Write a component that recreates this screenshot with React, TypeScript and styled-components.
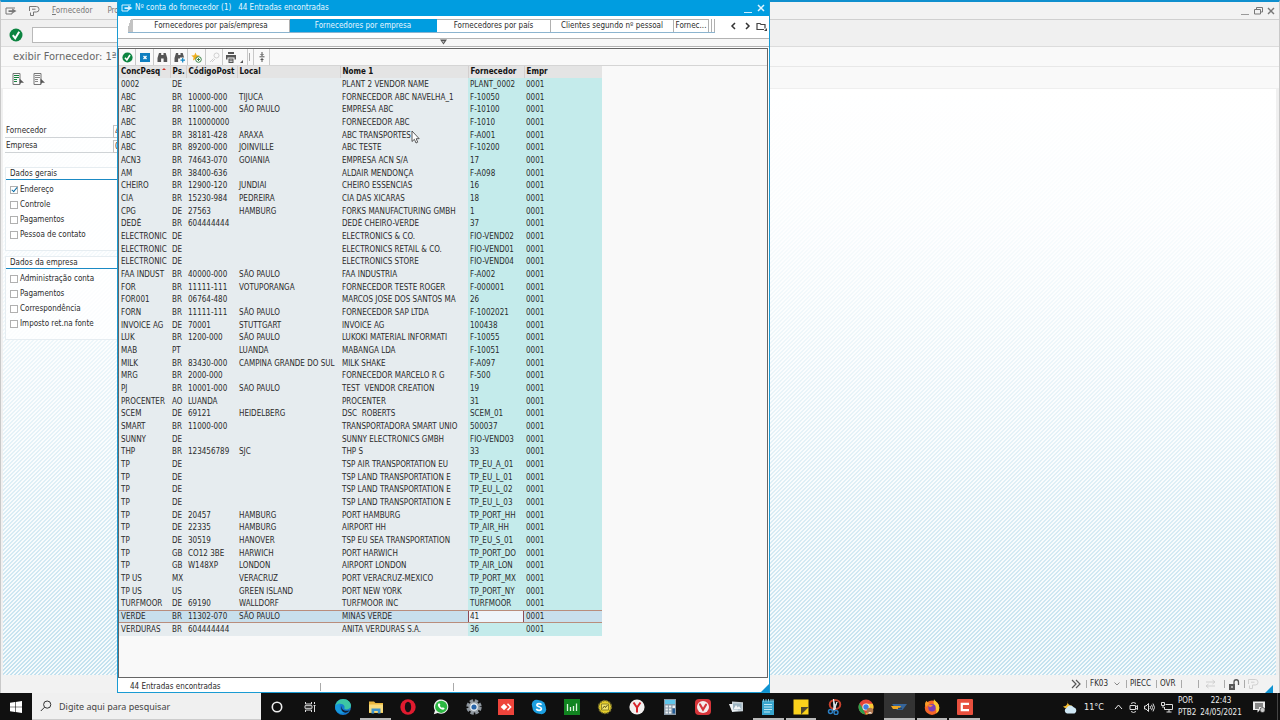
import React from "react";
import styled, { createGlobalStyle, css } from "styled-components";

const GlobalStyle = createGlobalStyle`
  *, *::before, *::after { box-sizing: border-box; }
  body { margin: 0; background: #101010; }
  button, input { font: inherit; color: inherit; }
  svg { display: block; flex: none; }
`;

const SAP_FONT = `"DejaVu Sans Condensed", "DejaVu Sans", sans-serif`;
const WIN_FONT = `"Noto Sans", "Open Sans", sans-serif`;

/* ---------- page ---------- */

const Desktop = styled.div`
  display: flex;
  flex-direction: column;
  min-height: 100vh;
  font-family: ${SAP_FONT};
  font-size: 8px;
  line-height: 12px;
  color: #2b2b2b;
`;

const Workspace = styled.div`
  position: relative;
  flex: 1;
  display: flex;
  flex-direction: column;
`;

const BareButton = styled.button`
  display: flex;
  align-items: center;
  justify-content: center;
  padding: 0;
  border: 0;
  background: none;
  white-space: nowrap;
`;

/* ---------- main window ---------- */

const MainWindow = styled.main`
  flex: 1;
  display: flex;
  flex-direction: column;
  border-top: 2px solid #0f8fce;
  border-left: 1px solid #c9c9c9;
  border-right: 1px solid #c9c9c9;
  background: #f0f0f0;
`;

const MenuBar = styled.nav`
  display: flex;
  align-items: center;
  gap: 12px;
  height: 18px;
  padding: 0 4px;
  border-bottom: 1px solid #cfcfcf;
  background: #f2f2f2;
  color: #777;
`;

const MenuItems = styled.div`
  display: flex;
  gap: 15px;
`;

const WindowButtons = styled.div`
  display: flex;
  gap: 4px;
  margin-left: auto;
`;

const CommandRow = styled.div`
  display: flex;
  align-items: center;
  gap: 9px;
  height: 27px;
  padding: 4px 8px 0;
  border-bottom: 1px solid #dcdcdc;
`;

const CommandInput = styled.input`
  width: 150px;
  height: 16px;
  padding: 0 4px;
  border: 1px solid #b9b9b9;
  background: #fff;
`;

const TitleRow = styled.h1`
  height: 20px;
  margin: 0;
  padding: 0 12px;
  border-bottom: 1px solid #e8e8e8;
  background: #f9f9f9;
  font-size: 11px;
  line-height: 20px;
  font-weight: 400;
  color: #666;
`;

const AppToolbar = styled.div`
  display: flex;
  align-items: center;
  gap: 9px;
  height: 22px;
  padding: 2px 11px 0;
  border-bottom: 1px solid #efefef;
  background: #f9f9f9;
`;

const Canvas = styled.div`
  flex: 1;
  margin: 0 3px 0 2px;
  padding: 36px 2px 0;
  background-image:
    linear-gradient(180deg, #fff 0%, rgba(255, 255, 255, 0.92) 20%, rgba(255, 255, 255, 0.6) 60%, rgba(255, 255, 255, 0.1) 100%),
    linear-gradient(135deg, #bcdeed 0 25%, #f4fafc 25% 50%, #bcdeed 50% 75%, #f4fafc 75% 100%);
  background-size: auto, 4px 4px;
`;

const FormRow = styled.label`
  display: flex;
  align-items: center;
  width: 300px;
  height: 13px;
  margin-bottom: 2px;
`;

const FormName = styled.span`
  width: 108px;
  height: 13px;
  padding-left: 1px;
  border-bottom: 1px solid #cfd3d6;
`;

const FormInput = styled.input`
  width: 80px;
  height: 13px;
  padding: 0 1px;
  border: 1px solid #c4c4c4;
  background: #fff;
`;

const GroupList = styled.div`
  padding-top: 12px;
`;

const Group = styled.fieldset`
  width: 340px;
  margin: 0 0 5px;
  padding: 0 0 8px;
  border: 1px solid #e6edf1;
  background: rgba(255, 255, 255, 0.75);
`;

const GroupTitle = styled.legend`
  float: left;
  width: 100%;
  height: 12px;
  margin-bottom: 2px;
  padding: 0 4px;
  border-bottom: 1px solid #1b8ac4;
  background: #fff;
`;

const CheckRow = styled.label`
  clear: both;
  display: flex;
  align-items: center;
  gap: 2px;
  height: 15px;
  padding-left: 4px;
`;

const CheckBox = styled.input`
  position: relative;
  appearance: none;
  width: 8px;
  height: 8px;
  margin: 0;
  border: 1px solid #b0b0b0;
  background: #fff;
  &:checked::after {
    content: "";
    position: absolute;
    left: 2px;
    top: -1px;
    width: 3px;
    height: 6px;
    border: solid #0a6ea8;
    border-width: 0 1px 1px 0;
    transform: rotate(40deg);
  }
`;

const StatusBar = styled.footer`
  display: flex;
  align-items: center;
  justify-content: flex-end;
  height: 18px;
  padding-right: 6px;
  background: #f2f2f2;
`;

const StatusItem = styled.div<{ $w: number }>`
  display: flex;
  align-items: center;
  gap: 6px;
  width: ${(p) => p.$w}px;
  height: 8px;
  padding-left: 3px;
  border-left: 1px solid #aaa;
`;

const Grip = styled.span`
  align-self: flex-end;
  border: 4px solid #0f93d2;
  border-top-color: transparent;
  border-left-color: transparent;
`;

/* ---------- dialog ---------- */

const Dialog = styled.section`
  position: absolute;
  top: 0;
  bottom: 0;
  left: 117px;
  width: 653px;
  display: flex;
  flex-direction: column;
  border: solid #1a9bd3;
  border-width: 0 1px 1px;
  background: #fff;
`;

const DialogTitle = styled.header`
  display: flex;
  align-items: center;
  gap: 2px;
  height: 16px;
  padding: 0 4px 0 3px;
  background: #009de0;
  color: #e9f7ff;
  white-space: pre;
`;

const TabBar = styled.div`
  display: flex;
  align-items: flex-end;
  height: 17px;
  padding: 0 2px 0 10px;
`;

const TabList = styled.div`
  display: flex;
  height: 14px;
  border-bottom: 1px solid #8cb4cf;
`;

const TabLead = styled.span`
  width: 5px;
  background: linear-gradient(110deg, #fff 0 30%, #c3c3c3 30% 100%);
`;

const Tab = styled(BareButton)<{ $w: number; $active?: boolean }>`
  width: ${(p) => p.$w}px;
  border: solid #b0b0b0;
  border-width: 1px 1px 0 0;
  ${(p) =>
    p.$active &&
    css`
      background: #009de0;
      color: #e6f6ff;
      border-color: #009de0;
    `}
`;

const TabStack = styled.span`
  width: 3px;
  border-right: 1px solid #b0b0b0;
`;

const TabTools = styled.div`
  display: flex;
  gap: 4px;
  align-items: center;
  height: 14px;
  margin-left: auto;
`;

const Splitter = styled.div`
  display: flex;
  justify-content: center;
  height: 9px;
  margin: 5px 0 1px;
  border: solid #b3b3b3;
  border-width: 1px 0;
  background: #f7f7f7;
`;

const ListFrame = styled.div`
  flex: 1;
  margin-right: 1px;
  border: 1px solid #666;
  background: #f9f9f9;
`;

const Toolbar = styled.div`
  display: flex;
  align-items: center;
  height: 16px;
`;

const Tool = styled(BareButton)<{ $w?: number }>`
  width: ${(p) => p.$w ?? 17}px;
  height: 16px;
  border-right: 1px solid #c9c9c9;
`;

const BoxedTool = styled(Tool)`
  border-left: 1px solid #c9c9c9;
`;

const ToolRule = styled.span`
  width: 1px;
  height: 8px;
  margin: 0 3px 0 1px;
  background: #aaa;
`;

const HeadBar = styled.div`
  border-top: 1px solid #d5d5d5;
`;

const Table = styled.table`
  width: 483px;
  table-layout: fixed;
  border-collapse: collapse;
  line-height: 12px;
  white-space: pre;
`;

const Th = styled.th`
  height: 12px;
  padding: 0 0 0 2px;
  border-right: 1px solid #d3cfcf;
  background: #e4e4e4;
  color: #111;
  font-weight: 700;
  text-align: left;
  &:last-child { border-right: 0; }
`;

const SortMark = styled.span`
  display: inline-block;
  margin-left: 2px;
  vertical-align: 4px;
  border: solid transparent;
  border-width: 0 2px 2px;
  border-bottom-color: #d0342c;
`;

const Row = styled.tr<{ $selected?: boolean }>`
  height: 13px;
  &:nth-child(3n) { height: 12px; }
  td {
    ${(p) =>
      p.$selected &&
      css`
        background: #c8dfec;
        box-shadow: inset 0 1px #b98d7c, inset 0 -1px #b98d7c;
      `}
  }
`;

const Td = styled.td<{ $key?: boolean }>`
  height: 12px;
  padding: 0 0 0 2px;
  overflow: hidden;
  background: ${(p) => (p.$key ? "#c4ebeb" : "#e6ecef")};
`;

const CellCursor = styled.span`
  display: block;
  height: 11px;
  margin: 0 0 0 -2px;
  padding-left: 1px;
  border: 1px solid #8d4a55;
  border-width: 0 1px;
  background: #eff4fa;
  line-height: 11px;
`;

const DialogStatus = styled.footer`
  position: relative;
  display: flex;
  align-items: center;
  height: 14px;
  padding-top: 4px;
`;

const StatusCell = styled.span<{ $w: number; $pad: number }>`
  width: ${(p) => p.$w}px;
  height: 8px;
  padding-left: ${(p) => p.$pad}px;
  border-right: 1px solid #aaa;
  line-height: 8px;
`;

const Spacer = styled.span`
  flex: 1;
`;

const Pointer = styled.svg`
  position: absolute;
  left: 293px;
  top: 130px;
`;

/* ---------- taskbar ---------- */

const Taskbar = styled.nav`
  display: flex;
  height: 27px;
  background: #101010;
  color: #eee;
  font-family: ${WIN_FONT};
`;

const Start = styled(BareButton)`
  width: 32px;
`;

const Search = styled.label`
  display: flex;
  align-items: center;
  gap: 7px;
  width: 229px;
  padding-left: 8px;
  border-bottom: 1px solid #ccc;
  background: #f0f0f0;
`;

const SearchInput = styled.input`
  flex: 1;
  min-width: 0;
  padding: 2px 0 0;
  border: 0;
  outline: 0;
  background: none;
  font-size: 9px;
  color: #444;
  &::placeholder { color: #444; opacity: 1; }
`;

const Apps = styled.div`
  display: grid;
  grid-template-columns: repeat(22, 1fr);
  width: 720px;
`;

const AppButton = styled(BareButton)<{ $open?: boolean; $active?: boolean }>`
  margin: 0 1px;
  padding-top: 3px;
  border-bottom: 2px solid ${(p) => (p.$open ? "#b9b9b9" : "transparent")};
  background: ${(p) => (p.$active ? "#333" : "none")};
  background-clip: padding-box;
`;

const Tray = styled.div`
  display: flex;
  align-items: center;
  margin: 0 2px 0 auto;
  padding: 1px 2px 0 0;
  border-right: 1px solid #444;
  line-height: 12px;
`;

const TrayText = styled.span<{ $w: number; $size: number; $center?: boolean }>`
  width: ${(p) => p.$w}px;
  text-align: ${(p) => (p.$center ? "center" : "left")};
  font-family: ${SAP_FONT};
  font-size: ${(p) => p.$size}px;
  white-space: pre;
`;

const TrayIcon = styled(BareButton)<{ $w: number }>`
  width: ${(p) => p.$w}px;
`;

/* ---------- icons ---------- */

const MenuGlyph = ({ color }: { color: string }) => (
  <svg width="12" height="8" viewBox="0 0 12 8" fill="none" stroke={color}>
    <path d="M10 1H1v6h6V5.500" />
    <path d="M3.500 3.200h3.700V1.500L11.500 4 7.200 6.500V4.900H3.500z" fill={color} stroke="none" />
  </svg>
);

const SessionGlyph = ({ color = "#777" }: { color?: string }) => (
  <svg width="11" height="10" viewBox="0 0 11 10" fill="none" stroke={color}>
    <path d="M.5 5V.5h6.800a2.700 2.700 0 0 1 0 5.500H4.500v3.500h-3V6.500M3 3.200h3.500" />
  </svg>
);

const OkGlyph = ({ size }: { size: number }) => (
  <svg width={size} height={size} viewBox="0 0 14 14">
    <circle cx="7" cy="7" r="6.500" fill="#0c8440" />
    <path d="M3.800 7.200l2.400 3 4-6.400" fill="none" stroke="#fff" strokeWidth="2" />
  </svg>
);

const ListGlyph = ({ color }: { color: string }) => (
  <svg width="12" height="12" viewBox="0 0 12 12" fill="none" stroke="#555">
    <path d="M1 .5h7v11H1z" stroke="#777" />
    <path d="M2 2.500h5M2 4.500h5M2 6.500h3M2 8.500h3" stroke={color} strokeWidth="1.200" />
    <path d="M7.500 5.500v6l1.500-1.700h3z" fill="#555" stroke="none" />
  </svg>
);

const Binoculars = ({ plus }: { plus?: boolean }) => (
  <svg width="11" height="11" viewBox="0 0 11 11" fill="#555">
    <path d="M2 1h2.200v2H6.500V1h2.200l1.500 5v4H6.600V6.500H4.100V10H.5V6z" />
    {plus && <path d="M6 5.500h5V11H6z" fill="#f9f9f9" />}
    {plus && <path d="M6.500 8.200h4.500M8.700 6v4.500" stroke="#0f86c4" strokeWidth="1.200" />}
  </svg>
);

const tools: { label: string; w?: number; icon: React.ReactNode }[] = [
  { label: "Transferir", icon: <OkGlyph size={11} /> },
  {
    label: "Fechar",
    w: 18,
    icon: (
      <svg width="10" height="9" viewBox="0 0 10 9">
        <path d="M0 0h10v9H0z" fill="#0f7fc0" />
        <path d="M3.500 3l3 3M6.500 3l-3 3" stroke="#fff" strokeWidth="1.300" />
      </svg>
    ),
  },
  { label: "Procurar", icon: <Binoculars /> },
  { label: "Continuar procura", icon: <Binoculars plus /> },
  {
    label: "Inserir na lista pessoal",
    w: 18,
    icon: (
      <svg width="11" height="11" viewBox="0 0 11 11">
        <path d="M4.500.500l1.200 2.700 3 .300-2.200 2 .700 3-2.700-1.500L2 8.500l.600-3-2.300-2 3-.300z" fill="#efae1e" />
        <circle cx="7.500" cy="7.500" r="2.800" fill="#fff" stroke="#388246" />
        <path d="M6 7.500h3M7.500 6v3" stroke="#388246" />
      </svg>
    ),
  },
  {
    label: "Eliminar da lista pessoal",
    icon: (
      <svg width="11" height="11" viewBox="0 0 11 11" fill="none" stroke="#d0d0d0">
        <path d="M1 10l3.500-3.500M3 10l3-3" />
        <circle cx="7.500" cy="3.500" r="2.500" />
      </svg>
    ),
  },
  {
    label: "Imprimir",
    w: 25,
    icon: (
      <svg width="18" height="11" viewBox="0 0 18 11" fill="#555">
        <path d="M2 0h6v2H2zM0 3h10v4.500H8.500v-2h-7v2H0zM2.500 6.500h5V11h-5z" />
        <path d="M3.500 8h3M3.500 9.500h3" stroke="#f9f9f9" strokeWidth=".7" />
        <path d="M17 8v3h-3z" />
      </svg>
    ),
  },
];

const Svg16 = ({ children }: { children: React.ReactNode }) => (
  <svg width="16" height="16" viewBox="0 0 16 16">
    {children}
  </svg>
);

const apps: { name: string; open?: boolean; active?: boolean; icon: React.ReactNode }[] = [
  { name: "Cortana", icon: <circle cx="8" cy="8" r="4.700" fill="none" stroke="#eee" strokeWidth="1.600" /> },
  {
    name: "Visão de tarefas",
    icon: (
      <path d="M3.500 3v2h6V3M3.500 13v-2h6v2M3 6.700h7v2.600H3zM12.500 3v2M12.500 7v6M11.500 6.500h2" fill="none" stroke="#ddd" />
    ),
  },
  {
    name: "Edge",
    icon: (
      <>
        <circle cx="8" cy="8" r="8" fill="#1579cf" />
        <path d="M.2 7C1 2.800 4.300 0 8 0c5 0 8 3.500 8 6.600 0 2.500-2 3.800-4.200 3.800-2 0-2.800-.8-2.300-1.700C10 7 8.500 5 6 5 3.500 5 1 6 .2 7z" fill="#3cc5a4" />
        <path d="M.1 8.500C0 6 3 4.300 5.700 4.600 3.500 6.800 4.800 12 9.500 13.600c-1 .6-2 .9-3 .9C3 14.500.3 12 .1 8.500z" fill="#1598dc" />
        <path d="M7.500 6.500c-1.500 1.500-.5 4.500 2.500 5.200 1.800.4 3.600 0 4.700-.8-1.200 2.300-3.500 3-5.200 2.700C6 12.600 5.500 8 7.500 6.500z" fill="#101f33" />
      </>
    ),
  },
  {
    name: "Explorador",
    open: true,
    icon: (
      <>
        <path d="M1 2.500h5l1.500 1.500H15v10H1z" fill="#e9b63e" />
        <path d="M1 5.500h14v8H1z" fill="#f9dc7d" />
        <path d="M3.500 14.500V9.500h9v5h-2.700v-2.500H6.200v2.500z" fill="#3f93cb" />
      </>
    ),
  },
  {
    name: "Opera",
    icon: (
      <>
        <circle cx="8" cy="8" r="7.700" fill="#e01b2f" />
        <ellipse cx="8" cy="8" rx="3.200" ry="5.300" fill="#161013" />
      </>
    ),
  },
  {
    name: "WhatsApp",
    icon: (
      <>
        <path d="M.8 15.200L2 11.500A7.200 7.200 0 1 1 4.700 14z" fill="#eee" />
        <circle cx="8.200" cy="7.800" r="6.100" fill="#2bb741" />
        <path d="M5.600 4.500c1-.6 1.300.4 1.800 1.600-.8.800-.5 1 .3 1.900.9.900 1.400 1.100 2 .3 1.700.7 2.200 1 1.700 1.800-1 1.400-3.200.7-4.900-1C4.800 7.400 4.300 5.300 5.600 4.500z" fill="#fff" />
      </>
    ),
  },
  {
    name: "Configurações",
    icon: (
      <>
        <circle cx="8" cy="8" r="6.200" fill="none" stroke="#8d959d" strokeWidth="3" strokeDasharray="3.300 1.570" />
        <circle cx="8" cy="8" r="5.600" fill="#9aa1a8" />
        <circle cx="8" cy="8" r="3.800" fill="#eef3f7" />
        <circle cx="8" cy="8" r="2.600" fill="#2864a8" />
      </>
    ),
  },
  {
    name: "AnyDesk",
    icon: (
      <>
        <path d="M0 0h16v16H0z" fill="#ee443b" />
        <path d="M6 4.700L9.300 8 6 11.300 2.700 8z" fill="#fff" />
        <path d="M9 5.200l1-.9L13.700 8 10 11.700l-1-.9L11.700 8z" fill="#fff" />
      </>
    ),
  },
  {
    name: "Skype",
    icon: (
      <>
        <circle cx="5.500" cy="5.500" r="4.700" fill="#1c9fe0" />
        <circle cx="10.500" cy="10.500" r="4.700" fill="#1c9fe0" />
        <circle cx="8" cy="8" r="6.700" fill="#1c9fe0" />
        <path d="M10.500 5.800C9.900 4.200 6 4 5.800 6c-.1 2.200 4.700 1.400 4.600 3.800-.1 2.200-4.400 2.100-5-.1" fill="none" stroke="#fff" strokeWidth="1.700" />
      </>
    ),
  },
  {
    name: "Project",
    icon: (
      <>
        <path d="M0 0h16v16H0z" fill="#118420" />
        <path d="M3.500 5v7M6.500 8v4M9.500 7v5M12.500 4.500V12" stroke="#dff5df" strokeWidth="1.300" />
      </>
    ),
  },
  {
    name: "Monitor",
    icon: (
      <>
        <circle cx="8" cy="8" r="6.400" fill="#e7cf2b" stroke="#77702a" strokeWidth="1.500" strokeDasharray="2 1" />
        <path d="M4.500 5h7v6h-7z" fill="#efe36c" stroke="#7c7320" strokeWidth=".8" />
        <path d="M5.500 9.500L7.500 7l1 1.500L10.500 6" fill="none" stroke="#5d5616" />
      </>
    ),
  },
  {
    name: "Yandex",
    icon: (
      <>
        <circle cx="8" cy="8" r="7.600" fill="#f3f0f0" />
        <path d="M4.500 3.500L8 8.500l3.500-5M8 8v5.500" fill="none" stroke="#d8232b" strokeWidth="2" />
      </>
    ),
  },
  {
    name: "Calculadora",
    icon: (
      <>
        <path d="M2 0h12v16H2z" fill="#8a9aa8" />
        <path d="M3 1h10v4H3z" fill="#5fc5ea" />
        <path d="M3.500 7.500h6M3.500 10.500h6M3.500 13.500h6" stroke="#eef2f5" strokeWidth="2" strokeDasharray="2.400 1" />
        <path d="M10.500 6.500h2.500v2.500h-2.500z" fill="#eef2f5" />
        <path d="M10.500 9.500h2.500v5h-2.500z" fill="#235b94" />
      </>
    ),
  },
  {
    name: "Vivaldi",
    icon: (
      <>
        <rect width="16" height="16" rx="4" fill="#d6353a" />
        <circle cx="8" cy="8" r="6" fill="#f4eded" />
        <path d="M5 5.500l3 5.200 3-5" fill="none" stroke="#d6353a" strokeWidth="2.200" strokeLinecap="round" />
      </>
    ),
  },
  {
    name: "Fotos",
    icon: (
      <>
        <path d="M4 2.500l11 .8v9L4 13z" fill="#c8d2d8" />
        <path d="M1 5h9v6.500l-6 1z" fill="#eef1f3" />
        <path d="M5 4.500h8.500v6H5z" fill="#9db5c2" />
        <path d="M5.500 10l2.500-4 1.800 2.500L11 7l2 3z" fill="#f4f7f8" />
      </>
    ),
  },
  {
    name: "Bloco de notas",
    open: true,
    icon: (
      <>
        <path d="M2 1.500h12V16H2z" fill="#38a5cd" />
        <path d="M4 5.500h8M4 8h8M4 10.500h8M4 13h6" stroke="#bfe8f5" />
        <path d="M3.500 0v3M6 0v3M8.500 0v3M11 0v3M13 0v3" stroke="#7cc7de" />
      </>
    ),
  },
  {
    name: "Notas autoadesivas",
    open: true,
    icon: (
      <>
        <path d="M.5.500h15V8L8 15.500H.5z" fill="#fbd21c" />
        <path d="M15.500 8v7.500H8z" fill="#fbd21c" />
        <path d="M8 8h7.500L8 15.500z" fill="#4c4630" />
      </>
    ),
  },
  {
    name: "Ferramenta de captura",
    icon: (
      <>
        <ellipse cx="9" cy="5.500" rx="5.300" ry="4.500" fill="none" stroke="#c8402c" strokeWidth="2" />
        <path d="M7.500 0l1.800 10H8zM11 3L7 11h1.500z" fill="#e3e8ec" stroke="#e3e8ec" />
        <circle cx="4.500" cy="12.500" r="2" fill="none" stroke="#2c80c4" strokeWidth="1.500" />
        <circle cx="10" cy="13.500" r="2" fill="none" stroke="#2c80c4" strokeWidth="1.500" />
      </>
    ),
  },
  {
    name: "Chrome",
    icon: (
      <>
        <circle cx="8" cy="8" r="7.500" fill="#e5463a" />
        <path d="M1.500 4.200L5 10l2.500 5.500A7.500 7.500 0 0 1 1.500 4.200z" fill="#2ba24c" />
        <path d="M8 4.700h6.700A7.500 7.500 0 0 1 7.500 15.500L11 10z" fill="#f8c932" />
        <circle cx="8" cy="8" r="3.600" fill="#f4f4f4" />
        <circle cx="8" cy="8" r="2.700" fill="#3e7fe0" />
        <circle cx="12" cy="12" r="3.300" fill="#b0774f" />
        <path d="M10 14.500c.5-2 3.500-2 4 0z" fill="#f1e5da" />
      </>
    ),
  },
  {
    name: "SAP Logon",
    open: true,
    active: true,
    icon: (
      <>
        <path d="M1 5h15l-4.500 6H6z" fill="#36659a" />
        <path d="M0 7h10l-1.500 3H2z" fill="#f0a823" />
        <path d="M7 9.500h4" stroke="#20446e" strokeWidth="1.500" />
      </>
    ),
  },
  {
    name: "Firefox",
    open: true,
    icon: (
      <>
        <circle cx="8" cy="8.700" r="7.200" fill="#f5662a" />
        <path d="M10 0c.5 2 5 3.500 5.300 8.500C15.500 12 13 14 12 14.500 14 9 8 8 10 0z" fill="#fcc933" />
        <path d="M1 5.500c0-1.500.8-3 1.600-3.700.1 1.200 2 2 3.400 2.200L2 8z" fill="#f99a26" />
        <circle cx="8" cy="8.700" r="3.700" fill="#7a3fb8" />
        <path d="M4 6.500c2-1 4-1 5 .2L6 8.300z" fill="#fb8c2b" />
      </>
    ),
  },
  {
    name: "Camtasia",
    open: true,
    icon: (
      <>
        <rect width="16" height="16" rx="1" fill="#e8503e" />
        <path d="M12 4.800H4.800v6.400H12" fill="none" stroke="#fff" strokeWidth="2.200" />
      </>
    ),
  },
];

/* ---------- data ---------- */

const columns = [
  { name: "ConcPesq", w: 51 },
  { name: "Ps.", w: 16 },
  { name: "CódigoPost", w: 51 },
  { name: "Local", w: 103 },
  { name: "Nome 1", w: 128 },
  { name: "Fornecedor", w: 56 },
  { name: "Empr", w: 78 },
];

const vendors = `0002|DE|||PLANT 2 VENDOR NAME|PLANT_0002
ABC|BR|10000-000|TIJUCA|FORNECEDOR ABC NAVELHA_1|F-10050
ABC|BR|11000-000|SÃO PAULO|EMPRESA ABC|F-10100
ABC|BR|110000000||FORNECEDOR ABC|F-1010
ABC|BR|38181-428|ARAXA|ABC TRANSPORTES|F-A001
ABC|BR|89200-000|JOINVILLE|ABC TESTE|F-10200
ACN3|BR|74643-070|GOIANIA|EMPRESA ACN S/A|17
AM|BR|38400-636||ALDAIR MENDONÇA|F-A098
CHEIRO|BR|12900-120|JUNDIAI|CHEIRO ESSENCIAS|16
CIA|BR|15230-984|PEDREIRA|CIA DAS XICARAS|18
CPG|DE|27563|HAMBURG|FORKS MANUFACTURING GMBH|1
DEDÉ|BR|604444444||DEDÉ CHEIRO-VERDE|37
ELECTRONIC|DE|||ELECTRONICS & CO.|FIO-VEND02
ELECTRONIC|DE|||ELECTRONICS RETAIL & CO.|FIO-VEND01
ELECTRONIC|DE|||ELECTRONICS STORE|FIO-VEND04
FAA INDUST|BR|40000-000|SÃO PAULO|FAA INDUSTRIA|F-A002
FOR|BR|11111-111|VOTUPORANGA|FORNECEDOR TESTE ROGER|F-000001
FOR001|BR|06764-480||MARCOS JOSE DOS SANTOS MA|26
FORN|BR|11111-111|SÃO PAULO|FORNECEDOR SAP LTDA|F-1002021
INVOICE AG|DE|70001|STUTTGART|INVOICE AG|100438
LUK|BR|1200-000|SÃO PAULO|LUKOKI MATERIAL INFORMATI|F-10055
MAB|PT||LUANDA|MABANGA LDA|F-10051
MILK|BR|83430-000|CAMPINA GRANDE DO SUL|MILK SHAKE|F-A097
MRG|BR|2000-000||FORNECEDOR MARCELO R G|F-500
PJ|BR|10001-000|SAO PAULO|TEST  VENDOR CREATION|19
PROCENTER|AO|LUANDA||PROCENTER|31
SCEM|DE|69121|HEIDELBERG|DSC  ROBERTS|SCEM_01
SMART|BR|11000-000||TRANSPORTADORA SMART UNIO|500037
SUNNY|DE|||SUNNY ELECTRONICS GMBH|FIO-VEND03
THP|BR|123456789|SJC|THP S|33
TP|DE|||TSP AIR TRANSPORTATION EU|TP_EU_A_01
TP|DE|||TSP LAND TRANSPORTATION E|TP_EU_L_01
TP|DE|||TSP LAND TRANSPORTATION E|TP_EU_L_02
TP|DE|||TSP LAND TRANSPORTATION E|TP_EU_L_03
TP|DE|20457|HAMBURG|PORT HAMBURG|TP_PORT_HH
TP|DE|22335|HAMBURG|AIRPORT HH|TP_AIR_HH
TP|DE|30519|HANOVER|TSP EU SEA TRANSPORTATION|TP_EU_S_01
TP|GB|CO12 3BE|HARWICH|PORT HARWICH|TP_PORT_DO
TP|GB|W148XP|LONDON|AIRPORT LONDON|TP_AIR_LON
TP US|MX||VERACRUZ|PORT VERACRUZ-MEXICO|TP_PORT_MX
TP US|US||GREEN ISLAND|PORT NEW YORK|TP_PORT_NY
TURFMOOR|DE|69190|WALLDORF|TURFMOOR INC|TURFMOOR
VERDE|BR|11302-070|SÃO PAULO|MINAS VERDE|41
VERDURAS|BR|604444444||ANITA VERDURAS S.A.|36`
  .split("\n")
  .map((line) => [...line.split("|"), "0001"]);

const groups = [
  { title: "Dados gerais", items: ["Endereço", "Controle", "Pagamentos", "Pessoa de contato"] },
  { title: "Dados da empresa", items: ["Administração conta", "Pagamentos", "Correspondência", "Imposto ret.na fonte"] },
];

const tabs = [
  { name: "Fornecedores por país/empresa", w: 157 },
  { name: "Fornecedores por empresa", w: 147, active: true },
  { name: "Fornecedores por país", w: 114 },
  { name: "Clientes segundo nº pessoal", w: 123 },
  { name: "Fornec...", w: 35 },
];

/* ---------- components ---------- */

const SearchHelp = () => (
  <Dialog role="dialog" aria-label="Nº conta do fornecedor">
    <DialogTitle>
      <MenuGlyph color="#d9f1ff" />
      <span>Nº conta do fornecedor (1)   44 Entradas encontradas</span>
      <WindowButtons>
        <BareButton aria-label="Minimizar">
          <svg width="9" height="9" viewBox="0 0 9 9"><path d="M0 8.500h8" stroke="#cdeeff" /></svg>
        </BareButton>
        <BareButton aria-label="Fechar">
          <svg width="8" height="8" viewBox="0 0 8 8"><path d="M1 1l6 6M7 1L1 7" stroke="#e2f5ff" strokeWidth="1.500" /></svg>
        </BareButton>
      </WindowButtons>
    </DialogTitle>
    <TabBar>
      <TabList role="tablist">
        <TabLead />
        {tabs.map((t) => (
          <Tab key={t.name} role="tab" aria-selected={!!t.active} $w={t.w} $active={t.active}>
            {t.name}
          </Tab>
        ))}
        <TabStack />
        <TabStack />
      </TabList>
      <TabTools>
        <BareButton aria-label="Aba anterior">
          <svg width="10" height="8" viewBox="0 0 10 8"><path d="M7 1L4 4l3 3" fill="none" stroke="#333" strokeWidth="1.500" /></svg>
        </BareButton>
        <BareButton aria-label="Aba seguinte">
          <svg width="10" height="8" viewBox="0 0 10 8"><path d="M4 1l3 3-3 3" fill="none" stroke="#333" strokeWidth="1.500" /></svg>
        </BareButton>
        <BareButton aria-label="Lista de abas">
          <svg width="11" height="9" viewBox="0 0 11 9"><path d="M8 7.500H1v-6h3l1 1h4v4" fill="none" stroke="#444" strokeWidth="1.200" /><path d="M11 6v3H8z" fill="#444" /></svg>
        </BareButton>
      </TabTools>
    </TabBar>
    <Splitter>
      <svg width="7" height="6" viewBox="0 0 7 6"><path d="M0 .5h7L3.500 5.500z" fill="#555" /><path d="M2 2h2.500L3.500 4z" fill="#bbb" /></svg>
    </Splitter>
    <ListFrame>
      <Toolbar role="toolbar">
        {tools.map((t) => (
          <Tool key={t.label} aria-label={t.label} $w={t.w}>
            {t.icon}
          </Tool>
        ))}
        <ToolRule />
        <BoxedTool aria-label="Restringir valores">
          <svg width="8" height="10" viewBox="0 0 8 10" stroke="#555" fill="none">
            <path d="M4 0v3.500M4 6v4M1.500 4.800h5M2.500 2L4 3.500 5.500 2M2.500 7.500h3" />
          </svg>
        </BoxedTool>
      </Toolbar>
      <HeadBar>
        <Table>
          <colgroup>
            {columns.map((c) => (
              <col key={c.name} width={c.w} />
            ))}
          </colgroup>
          <thead>
            <tr>
              {columns.map((c, i) => (
                <Th key={c.name}>
                  {c.name}
                  {i === 0 && <SortMark />}
                </Th>
              ))}
            </tr>
          </thead>
          <tbody>
            {vendors.map((v, r) => (
              <Row key={r} $selected={v[0] === "VERDE"}>
                {v.map((text, i) => (
                  <Td key={i} $key={i > 4}>
                    {text === "41" ? <CellCursor>{text}</CellCursor> : text}
                  </Td>
                ))}
              </Row>
            ))}
          </tbody>
        </Table>
      </HeadBar>
    </ListFrame>
    <DialogStatus>
      <StatusCell $w={203} $pad={12}>44 Entradas encontradas</StatusCell>
      <StatusCell $w={133} $pad={0} />
      <Spacer />
      <Grip />
    </DialogStatus>
    <Pointer width="9" height="14" viewBox="0 0 9 14">
      <path d="M1 1v10.500l2.400-2.200L5 13l1.700-.8L5.200 8.700h3z" fill="#fff" stroke="#333" strokeWidth=".8" />
    </Pointer>
  </Dialog>
);

export default function App() {
  return (
    <Desktop>
      <GlobalStyle />
      <Workspace>
        <MainWindow>
          <MenuBar>
            <MenuGlyph color="#777" />
            <SessionGlyph />
            <MenuItems>
              <BareButton><span><u>F</u>ornecedor</span></BareButton>
              <BareButton>Processar</BareButton>
            </MenuItems>
            <WindowButtons>
              <BareButton aria-label="Minimizar">
                <svg width="9" height="8" viewBox="0 0 9 8"><path d="M0 7.500h8" stroke="#999" /></svg>
              </BareButton>
              <BareButton aria-label="Restaurar">
                <svg width="9" height="8" viewBox="0 0 9 8" fill="none" stroke="#777"><path d="M.5 2.500h6v4.500h-6zM2.500 2.500v-2h6v4.500h-2" /></svg>
              </BareButton>
              <BareButton aria-label="Fechar">
                <svg width="8" height="8" viewBox="0 0 8 8"><path d="M1 1l6 6M7 1L1 7" stroke="#777" strokeWidth="1.400" /></svg>
              </BareButton>
            </WindowButtons>
          </MenuBar>
          <CommandRow>
            <BareButton aria-label="Entrar"><OkGlyph size={14} /></BareButton>
            <CommandInput aria-label="Comando" />
          </CommandRow>
          <TitleRow>exibir Fornecedor: 1ª tela</TitleRow>
          <AppToolbar>
            <BareButton aria-label="Marcar tudo"><ListGlyph color="#14803c" /></BareButton>
            <BareButton aria-label="Desmarcar tudo"><ListGlyph color="#888" /></BareButton>
          </AppToolbar>
          <Canvas>
            <FormRow><FormName>Fornecedor</FormName><FormInput defaultValue="41" /></FormRow>
            <FormRow><FormName>Empresa</FormName><FormInput defaultValue="0001" /></FormRow>
            <GroupList>
              {groups.map((g) => (
                <Group key={g.title}>
                  <GroupTitle>{g.title}</GroupTitle>
                  {g.items.map((item) => (
                    <CheckRow key={item}>
                      <CheckBox type="checkbox" defaultChecked={item === "Endereço"} />
                      {item}
                    </CheckRow>
                  ))}
                </Group>
              ))}
            </GroupList>
          </Canvas>
          <StatusBar>
            <svg width="15" height="10" viewBox="0 0 15 10"><path d="M1 1l4 4-4 4M5 1l4 4-4 4" fill="none" stroke="#555" strokeWidth="1.200" /></svg>
            <StatusItem $w={40}>FK03
              <svg width="6" height="4" viewBox="0 0 6 4"><path d="M.5.500L3 3 5.500.500" fill="none" stroke="#888" /></svg>
            </StatusItem>
            <StatusItem $w={30}>PIECC</StatusItem>
            <StatusItem $w={25}>OVR</StatusItem>
            <StatusItem $w={17} />
            <StatusItem $w={26}>
              <svg width="16" height="10" viewBox="0 0 16 10"><path d="M4 3h9M10.500 1L13 3l-2.500 2M13 7H4M6.500 5L4 7l2.500 2" fill="none" stroke="#d0d0d0" /></svg>
            </StatusItem>
            <StatusItem $w={20}>
              <svg width="12" height="11" viewBox="0 0 12 11"><path d="M1 5h6v6H1z" fill="#555" /><path d="M6 5V3a2 2 0 0 1 4.500 0v3" fill="none" stroke="#555" strokeWidth="1.300" /><path d="M4 7v2" stroke="#fff" /></svg>
            </StatusItem>
            <StatusItem $w={21}><SessionGlyph color="#d0d0d0" /></StatusItem>
            <Grip />
          </StatusBar>
        </MainWindow>
        <SearchHelp />
      </Workspace>
      <Taskbar>
        <Start aria-label="Iniciar">
          <svg width="12" height="12" viewBox="0 0 12 12" fill="#fff"><path d="M0 1.700l5-.7v4.700H0zM5.600.900L12 0v5.700H5.600zM0 6.300h5V11l-5-.7zM5.600 6.300H12V12l-6.400-.9z" /></svg>
        </Start>
        <Search>
          <svg width="12" height="12" viewBox="0 0 12 12" fill="none" stroke="#333"><circle cx="7.200" cy="4.600" r="3.600" /><path d="M4.600 7.200L.8 11" /></svg>
          <SearchInput aria-label="Pesquisar" placeholder="Digite aqui para pesquisar" />
        </Search>
        <Apps>
          {apps.map((a) => (
            <AppButton key={a.name} aria-label={a.name} $open={a.open} $active={a.active}>
              <Svg16>{a.icon}</Svg16>
            </AppButton>
          ))}
        </Apps>
        <Tray>
          <TrayIcon $w={28} aria-label="Clima">
            <svg width="16" height="14" viewBox="0 0 16 14">
              <path d="M6 .500C5 3 7 6 10 5.500 9 9 3.500 9.500 1 6.500 5 6.500 6 3 6 .500z" fill="#f2bb32" />
              <path d="M5 13.500a3 3 0 0 1-.3-5.700 4 4 0 0 1 7-.5A3.300 3.300 0 0 1 12.500 13.500z" fill="#cfe8f5" />
            </svg>
          </TrayIcon>
          <TrayText $w={30} $size={9}>11°C</TrayText>
          <svg width="9" height="6" viewBox="0 0 9 6"><path d="M1 5l3.500-4L8 5" fill="none" stroke="#eee" /></svg>
          <TrayIcon $w={21} aria-label="Reunir agora">
            <svg width="10" height="11" viewBox="0 0 10 11" fill="none" stroke="#ddd"><path d="M1 3.500h5.500v4H1zM6.500 5l2-1.500v4l-2-1.500M2 1.500Q4.500-.5 7 1.500M2 9.500Q4.500 11.500 7 9.500" /></svg>
          </TrayIcon>
          <svg width="11" height="9" viewBox="0 0 11 9" fill="none" stroke="#ddd"><path d="M.5 3h1.500l2.500-2.500v8L2 6H.5zM6 3q1 1.500 0 3M7.500 1.800q2 2.700 0 5.400M9 .6q3 3.900 0 7.800" /></svg>
          <TrayIcon $w={23} aria-label="Rede">
            <svg width="12" height="11" viewBox="0 0 12 11" fill="none" stroke="#ddd"><path d="M4.500 2.500h7v5h-8V5M8 7.500v2.500M5.500 10h5M.5.500h3v3h-3zM2 3.500V6" /></svg>
          </TrayIcon>
          <TrayText $w={22} $size={8}>{"POR\nPTB2"}</TrayText>
          <TrayText $w={42} $size={8} $center>{"22:43\n24/05/2021"}</TrayText>
          <TrayIcon $w={33} aria-label="Notificações">
            <svg width="12" height="12" viewBox="0 0 12 12"><path d="M0 .5h12v8.500H7L4.500 11.500V9H0z" fill="#eee" /><path d="M2 3h8M2 5h8M2 7h4" stroke="#222" /><circle cx="9.500" cy="9" r="2.500" fill="#ccc" stroke="#222" strokeWidth=".6" /></svg>
          </TrayIcon>
        </Tray>
      </Taskbar>
    </Desktop>
  );
}
